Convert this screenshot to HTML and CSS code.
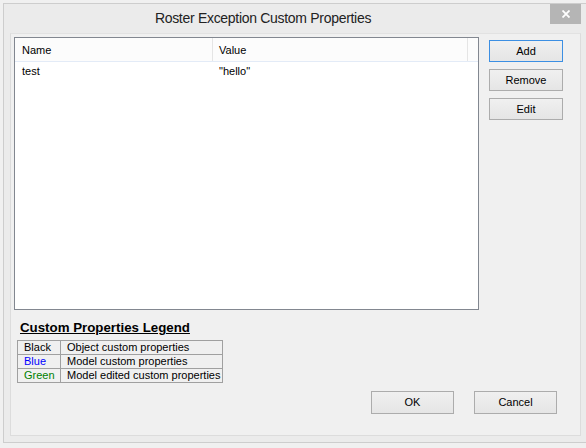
FILE: index.html
```html
<!DOCTYPE html>
<html>
<head>
<meta charset="utf-8">
<link rel="stylesheet" href="styles.css">
</head>
<body>
<div class="window">
  <div class="titlebar">
    <div class="title">Roster Exception Custom Properties</div>
    <div class="close">
      <svg width="8" height="8" viewBox="0 0 8 8"><path d="M0.5 0.5 L7.5 7.5 M7.5 0.5 L0.5 7.5" stroke="#ffffff" stroke-width="1.8" fill="none"/></svg>
    </div>
  </div>
  <div class="client">
    <div class="top">
      <div class="list">
        <div class="lhead">
          <div class="c1">Name</div>
          <div class="c2">Value</div>
          <div class="c3"></div>
        </div>
        <div class="lrow">
          <div class="c1">test</div>
          <div class="c2">"hello"</div>
        </div>
      </div>
      <div class="side">
        <div class="btn focus">Add</div>
        <div class="btn">Remove</div>
        <div class="btn">Edit</div>
      </div>
    </div>
    <div class="legend-title">Custom Properties Legend</div>
    <div class="legend">
      <div class="lc k">Black</div><div class="lc v">Object custom properties</div>
      <div class="lc k blue">Blue</div><div class="lc v">Model custom properties</div>
      <div class="lc k green">Green</div><div class="lc v">Model edited custom properties</div>
    </div>
    <div class="footer">
      <div class="btn wide">OK</div>
      <div class="btn wide">Cancel</div>
    </div>
  </div>
</div>
</body>
</html>
```

FILE: styles.css
```css
* { box-sizing: border-box; }
html, body { margin: 0; padding: 0; }
body {
  width: 586px;
  height: 448px;
  overflow: hidden;
  background: #f0f0f0;
  font-family: "Liberation Sans", Arial, sans-serif;
  font-size: 11px;
  color: #000;
}
.window {
  margin: 3px 0 0 3px;
  width: 585px;
  height: 440px;
  background: #ebebeb;
  border: 1px solid #cdcdcd;
  display: flex;
  flex-direction: column;
}
.titlebar {
  height: 29px;
  display: flex;
  align-items: flex-start;
}
.title {
  flex: 1;
  text-align: center;
  padding-right: 28px;
  line-height: 29px;
  font-size: 14px;
  letter-spacing: -0.3px;
  color: #222;
}
.close {
  width: 31px;
  height: 20px;
  margin-right: 6px;
  background: #b5b5b5;
  display: flex;
  align-items: center;
  justify-content: center;
}
.close svg { display: block; }
.client {
  margin: 0 6px;
  height: 403px;
  background: #f0f0f0;
  border: 1px solid #dcdcdc;
  border-top-color: #e2e2e2;
  display: flex;
  flex-direction: column;
}
.top {
  display: flex;
  padding: 3px 0 0 3px;
}
.list {
  width: 465px;
  height: 273px;
  background: #fff;
  border: 1px solid #828790;
}
.lhead {
  display: flex;
  height: 24px;
  background: #fcfcfc;
  border-bottom: 1px solid #e3ebf7;
}
.lhead > div {
  line-height: 23px;
  padding-top: 1px;
  padding-left: 6px;
  white-space: nowrap;
}
.lrow > div {
  padding-left: 6px;
  white-space: nowrap;
}
.lhead .c1 { width: 198px; border-right: 1px solid #e5e5e5; padding-left: 7px; }
.lhead .c2 { width: 255px; border-right: 1px solid #e5e5e5; }
.lhead .c3 { flex: 1; }
.lrow { display: flex; height: 17px; }
.lrow > div { line-height: 18px; }
.lrow .c1 { width: 198px; padding-left: 7px; }
.lrow .c2 { width: 255px; }
.side {
  display: flex;
  flex-direction: column;
  gap: 7px;
  margin-left: 10px;
  padding-top: 3px;
}
.btn {
  width: 74px;
  height: 22px;
  border: 1px solid #acacac;
  background: linear-gradient(#f0f0f0, #e5e5e5);
  text-align: center;
  line-height: 20px;
  font-size: 11px;
  color: #000;
}
.btn.focus { border-color: #3c8fe3; }
.legend-title {
  margin-top: 10px;
  padding-left: 9px;
  font-weight: bold;
  font-size: 13.3px;
  line-height: 15px;
  text-decoration: underline;
}
.legend {
  margin: 5px 0 0 6px;
  display: grid;
  grid-template-columns: 43px 162px;
  width: 206px;
  border-top: 1px solid #a0a0a0;
  border-left: 1px solid #a0a0a0;
}
.lc {
  height: 14px;
  border-right: 1px solid #a0a0a0;
  border-bottom: 1px solid #a0a0a0;
  padding-left: 6px;
  line-height: 13px;
  font-size: 11px;
  white-space: nowrap;
}
.lc.blue { color: #0000ff; }
.lc.green { color: #008000; }
.footer {
  display: flex;
  justify-content: flex-end;
  gap: 20px;
  margin-top: 8px;
  padding-right: 23px;
}
.btn.wide { width: 83px; height: 23px; line-height: 21px; }
```
